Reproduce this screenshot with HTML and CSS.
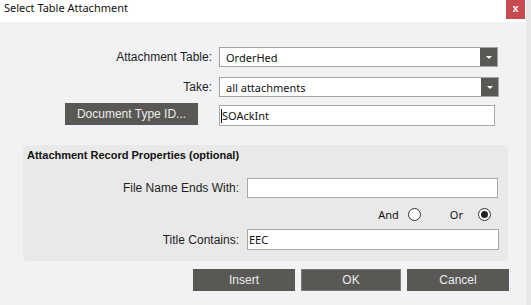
FILE: index.html
```html
<!DOCTYPE html>
<html>
<head>
<meta charset="utf-8">
<link rel="stylesheet" href="styles.css">
</head>
<body>
<div class="window">
  <div class="main">
    <div class="titlebar">
      <span class="title">Select Table Attachment</span>
      <span class="close">x</span>
    </div>
    <div class="content">
      <div class="top-form">
        <label class="label">Attachment Table:</label>
        <div class="select w279"><span class="value">OrderHed</span><span class="drop"><span class="tri"></span></span></div>
        <label class="label">Take:</label>
        <div class="select w280"><span class="value">all attachments</span><span class="drop"><span class="tri"></span></span></div>
        <div class="btn doc-btn">Document Type ID...</div>
        <div class="input doc-input"><span class="caret"></span>SOAckInt</div>
      </div>
      <div class="group">
        <div class="group-title">Attachment Record Properties (optional)</div>
        <div class="group-row file-row">
          <label class="label glabel">File Name Ends With:</label>
          <div class="input ginput"></div>
        </div>
        <div class="radio-row">
          <span class="rlabel">And</span><span class="radio"></span>
          <span class="rlabel or">Or</span><span class="radio checked"></span>
        </div>
        <div class="group-row">
          <label class="label glabel">Title Contains:</label>
          <div class="input ginput wide">EEC</div>
        </div>
      </div>
      <div class="actions">
        <div class="btn act">Insert</div>
        <div class="btn act ok">OK</div>
        <div class="btn act">Cancel</div>
      </div>
    </div>
  </div>
  <div class="edge"></div>
</div>
</body>
</html>
```
FILE: styles.css
```css
html, body {
  margin: 0;
  padding: 0;
}
body {
  width: 531px;
  height: 305px;
  overflow: hidden;
  font-family: "Liberation Sans", Arial, sans-serif;
  font-size: 12px;
  color: #1e1e1e;
}
.window {
  display: flex;
  width: 531px;
  height: 305px;
  background: #f2f2f4;
}
.main {
  width: 526px;
  display: flex;
  flex-direction: column;
}
.edge {
  width: 5px;
  background: #e8e8ea;
}
.titlebar {
  height: 22px;
  background: #ffffff;
  display: flex;
  align-items: flex-start;
}
.title {
  font-family: "Noto Sans", sans-serif;
  font-size: 11px;
  line-height: 16px;
  padding-left: 4px;
  color: #111;
}
.close {
  margin-left: auto;
  margin-right: 1px;
  width: 19px;
  height: 19px;
  background: #c8494f;
  color: #fff;
  font-family: "Liberation Sans", sans-serif;
  font-weight: bold;
  font-size: 11px;
  line-height: 17px;
  text-align: center;
}
.content {
  padding-top: 25px;
}
.top-form {
  display: grid;
  grid-template-columns: 212px auto;
  grid-template-rows: 20px 20px 18px;
  column-gap: 7px;
  row-gap: 10px;
  align-items: start;
}
.label {
  text-align: right;
  line-height: 14px;
  color: #1e1e1e;
  align-self: center;
}
.select {
  box-sizing: border-box;
  height: 20px;
  border: 1px solid #a3a3a3;
  background: #fff;
  display: flex;
  align-items: center;
}
.w279 { width: 279px; }
.w280 { width: 280px; }
.value {
  flex: 1;
  padding-left: 6px;
  font-family: "Noto Sans", sans-serif;
  font-size: 11px;
  color: #111;
}
.drop {
  width: 17px;
  align-self: stretch;
  background: #595855;
  display: flex;
  align-items: center;
  justify-content: center;
}
.tri {
  width: 0;
  height: 0;
  border-left: 3px solid transparent;
  border-right: 3px solid transparent;
  border-top: 3px solid #fff;
  margin-top: 1px;
}
.btn {
  background: #595855;
  color: #ececec;
  text-align: center;
  font-size: 12px;
  line-height: 22px;
  height: 22px;
  box-sizing: border-box;
}
.doc-btn {
  width: 133px;
  justify-self: end;
  margin-right: 14px;
  margin-top: -4px;
}
.input {
  box-sizing: border-box;
  height: 21px;
  border: 1px solid #a8a8a8;
  background: #fff;
  font-family: "Noto Sans", sans-serif;
  font-size: 11px;
  line-height: 18px;
  color: #111;
  display: flex;
  align-items: center;
}
.doc-input {
  width: 276px;
  margin-top: -2px;
  padding-left: 1px;
}
.caret {
  width: 1px;
  height: 14px;
  background: #111;
}
.group {
  margin: 20px 0 0 23px;
  width: 485px;
  height: 116px;
  box-sizing: border-box;
  background: #e9e9e9;
  border-radius: 4px;
  padding: 3px 0 0 4px;
}
.group-title {
  font-weight: bold;
  font-size: 11px;
  line-height: 14px;
  color: #111;
}
.group-row {
  display: grid;
  grid-template-columns: 212px 251px;
  column-gap: 8px;
  align-items: center;
}
.file-row {
  margin-top: 16px;
}
.file-row .ginput {
  height: 20px;
}
.ginput {
  padding-left: 1px;
}
.wide { width: 252px; }
.radio-row {
  display: flex;
  justify-content: flex-end;
  align-items: center;
  margin-top: 10px;
  margin-right: 17px;
  height: 13px;
  margin-bottom: 8px;
}
.rlabel {
  font-family: "Noto Sans", sans-serif;
  font-size: 11px;
  color: #111;
  margin-right: 9px;
}
.rlabel.or {
  margin-left: 29px;
  margin-right: 15px;
}
.radio {
  width: 13px;
  height: 13px;
  box-sizing: border-box;
  border: 1px solid #333;
  border-radius: 50%;
  background: #fff;
  display: flex;
  align-items: center;
  justify-content: center;
}
.radio.checked::after {
  content: "";
  width: 7px;
  height: 7px;
  border-radius: 50%;
  background: #222;
}
.actions {
  display: flex;
  gap: 6px;
  margin: 8px 0 0 193px;
}
.act {
  width: 102px;
}
.act.ok {
  width: 100px;
  border: 1px solid #7a7a7a;
  line-height: 20px;
}
```
